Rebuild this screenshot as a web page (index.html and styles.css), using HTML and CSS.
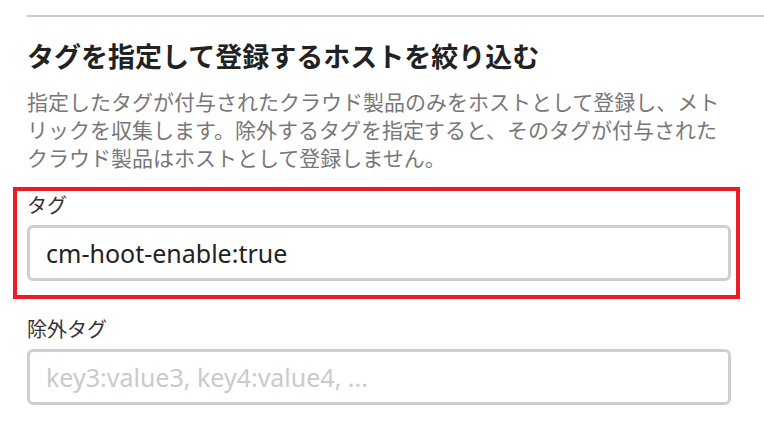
FILE: index.html
```html
<!DOCTYPE html>
<html lang="ja">
<head>
    <meta charset="UTF-8">
    <title>タグを指定して登録するホストを絞り込む</title>
    <link rel="stylesheet" href="styles.css">
</head>
<body>
    <div class="panel">
        <div class="divider"></div>

        <h2 class="section-title">タグを指定して登録するホストを絞り込む</h2>
        <p class="section-desc">
            指定したタグが付与されたクラウド製品のみをホストとして登録し、メトリックを収集します。除外するタグを指定すると、そのタグが付与されたクラウド製品はホストとして登録しません。
        </p>

        <div class="field highlight">
            <label class="field-label" for="tags">タグ</label>
            <input class="field-input" id="tags" type="text" value="cm-hoot-enable:true">
        </div>

        <div class="field">
            <label class="field-label" for="exclude-tags">除外タグ</label>
            <input class="field-input" id="exclude-tags" type="text" placeholder="key3:value3, key4:value4, ...">
        </div>
    </div>
</body>
</html>
```

FILE: styles.css
```css
body {
    margin: 0;
    background: #fff;
    font-family: "Noto Sans", "Noto Sans CJK JP", sans-serif;
    color: #333;
}

.panel {
    padding: 15px 33px 0 27px;
}

.divider {
    border-top: 2px solid #cccccc;
    margin-right: -33px;
}

.section-title {
    margin: 20px 0 0;
    font-family: "Noto Sans CJK JP", sans-serif;
    font-size: 27px;
    font-weight: 700;
    line-height: 38px;
    color: #222;
}

.section-desc {
    margin: 12px 0 0;
    font-family: "Noto Sans CJK JP", sans-serif;
    font-size: 21px;
    line-height: 28px;
    color: #777;
}

.field {
    display: flex;
    flex-direction: column;
}

.highlight {
    margin: 16px -9px 0 -14px;
    padding: 0 5px 14px 10px;
    border: 4px solid #ed1c24;
}

.field + .field {
    margin-top: 16px;
}

.field-label {
    font-family: "Noto Sans CJK JP", sans-serif;
    font-size: 20px;
    line-height: 28px;
    color: #333;
    margin-bottom: 6px;
}

.field-input {
    box-sizing: border-box;
    width: 100%;
    height: 56px;
    padding: 0 16px;
    border: 3px solid #cfcfcf;
    border-radius: 6px;
    font-family: "Noto Sans", sans-serif;
    font-size: 25px;
    color: #222;
    background: #fff;
    outline: none;
}

.field-input::placeholder {
    color: #cacaca;
}
```
